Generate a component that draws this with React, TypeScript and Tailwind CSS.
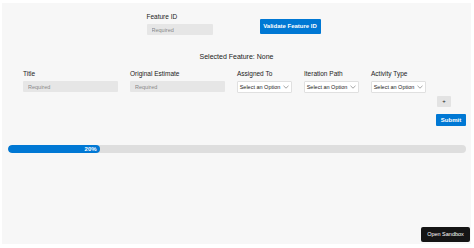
import { FC } from 'react';

const font = { fontFamily: '"Liberation Sans", Arial, sans-serif' };

const Field: FC<{ label: string; width: string }> = ({ label, width }) => (
  <div className="flex flex-col">
    <label className="text-[6.5px] leading-[8px] text-[#222]">{label}</label>
    <input
      placeholder="Required"
      className={`${width} mt-[3px] h-[11px] rounded-[1px] bg-[#e6e6e6] px-[5px] text-[5.5px] outline-none placeholder:text-[#888]`}
    />
  </div>
);

const Select: FC<{ label: string }> = ({ label }) => (
  <div className="flex flex-col">
    <label className="text-[6.5px] leading-[8px] text-[#222]">{label}</label>
    <div className="mt-[3px] flex h-[12px] w-[55px] items-center justify-center gap-[3px] rounded-[1px] border border-[#e0e0e0] bg-white text-[5.5px] text-[#222]">
      <span>Select an Option</span>
      <svg width="6" height="4" viewBox="0 0 6 4" fill="none">
        <path d="M0.5 0.8 L3 3.2 L5.5 0.8" stroke="#666" strokeWidth="0.6" />
      </svg>
    </div>
  </div>
);

export default function App() {
  return (
    <div className="relative h-[248px] w-[474px] bg-white pb-[4px] pl-[2px] pr-[3px] pt-[3px]" style={font}>
      <div className="flex h-full flex-col bg-[#f7f7f7]">
        <div className="flex items-end justify-center gap-[47px] pr-[6px] pt-[10px]">
          <Field label="Feature ID" width="w-[66px]" />
          <button className="mb-[1px] h-[15px] w-[61px] rounded-[1px] bg-[#0078d4] text-[6px] font-bold text-white">
            Validate Feature ID
          </button>
        </div>
        <div className="mt-[17px] text-center text-[7px] leading-[9px] text-[#222]">
          Selected Feature: None
        </div>
        <div className="mt-[9px] flex gap-[12px] pl-[21px]">
          <Field label="Title" width="w-[95px]" />
          <Field label="Original Estimate" width="w-[95px]" />
          <Select label="Assigned To" />
          <Select label="Iteration Path" />
          <Select label="Activity Type" />
        </div>
        <div className="mt-[3px] flex justify-end pr-[20px]">
          <button className="flex h-[11px] w-[14px] items-center justify-center rounded-[1px] bg-[#e3e3e3] text-[6px] text-[#222]">
            +
          </button>
        </div>
        <div className="mt-[7px] flex justify-end pr-[5px]">
          <button className="h-[12px] w-[30px] rounded-[1px] bg-[#0078d4] text-[6px] font-bold text-white">
            Submit
          </button>
        </div>
        <div className="mt-[19px] pl-[6px] pr-[5px]">
          <div className="h-[8px] w-full overflow-hidden rounded-full bg-[#dedede]">
            <div
              className="flex h-full items-center justify-end rounded-full bg-[#0078d4] pr-[3px] text-[6px] font-bold text-white"
              style={{ width: '20%' }}
            >
              20%
            </div>
          </div>
        </div>
      </div>
      <button className="absolute bottom-[6px] right-[4px] h-[15px] w-[49px] rounded-[2px] bg-[#151515] text-[5.5px] text-white">
        Open Sandbox
      </button>
    </div>
  );
}
